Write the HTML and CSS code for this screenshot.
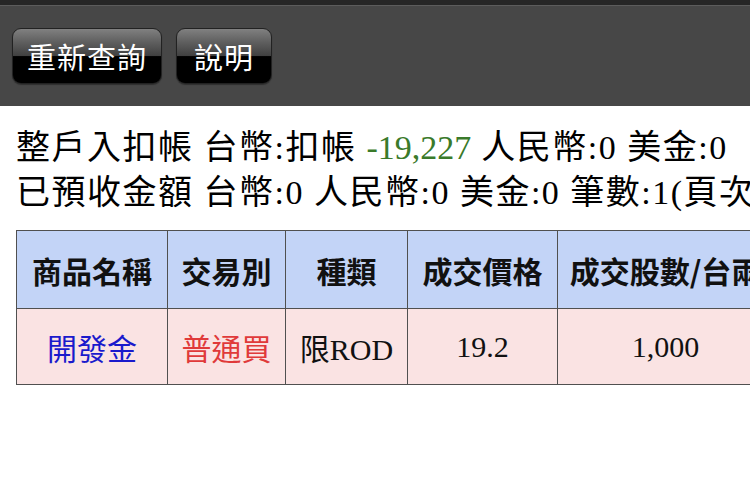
FILE: index.html
```html
<!DOCTYPE html>
<html lang="zh-Hant">
<head>
<meta charset="utf-8">
<title>成交回報</title>
<link rel="stylesheet" href="styles.css">
</head>
<body>
<div class="page">
  <header class="toolbar">
    <button class="btn btn-query">重新查詢</button>
    <button class="btn btn-help">說明</button>
  </header>
  <main class="content">
    <div class="summary">
      <div class="line">整戶入扣帳 台幣:扣帳 <span class="neg">-19,227</span> 人民幣:0 美金:0</div>
      <div class="line">已預收金額 台幣:0 人民幣:0 美金:0 筆數:1(頁次:1/1)</div>
    </div>
    <table class="grid">
      <colgroup>
        <col class="c1">
        <col class="c2">
        <col class="c3">
        <col class="c4">
        <col class="c5">
      </colgroup>
      <thead>
        <tr>
          <th>商品名稱</th>
          <th>交易別</th>
          <th>種類</th>
          <th>成交價格</th>
          <th>成交股數/台兩</th>
        </tr>
      </thead>
      <tbody>
        <tr>
          <td class="name">開發金</td>
          <td class="buy">普通買</td>
          <td>限ROD</td>
          <td>19.2</td>
          <td>1,000</td>
        </tr>
      </tbody>
    </table>
  </main>
</div>
</body>
</html>
```

FILE: styles.css
```css
html, body {
  margin: 0;
  padding: 0;
  background: #ffffff;
  overflow: hidden;
}

.page {
  width: 750px;
  height: 489px;
  overflow: hidden;
}

.toolbar {
  display: flex;
  gap: 14px;
  height: 56px;
  padding: 23px 12px 22px 12px;
  border-top: 5px solid #262626;
  background: #474747;
  box-shadow: inset 0 1px 0 #5c5c5c;
}

.btn {
  box-sizing: border-box;
  height: 56px;
  padding: 0;
  border: 1px solid #222222;
  border-radius: 9px;
  background: linear-gradient(to bottom, #808080 0%, #5e5e5e 25%, #404040 50%, #000000 51%, #000000 100%);
  color: #ffffff;
  font-family: "Noto Sans CJK TC", "Noto Sans", sans-serif;
  font-size: 29px;
  letter-spacing: 1px;
  line-height: 54px;
  white-space: nowrap;
  text-align: center;
  box-shadow: 0 1px 1px rgba(0, 0, 0, 0.35);
}

.btn-query {
  width: 150px;
}

.btn-help {
  width: 96px;
}

.content {
  width: 900px;
  padding: 0 0 0 16px;
}

.summary {
  padding-top: 19px;
  margin-bottom: 15px;
  font-family: "Liberation Serif", "Noto Sans CJK TC", serif;
  font-size: 34px;
  line-height: 45px;
  color: #000000;
  white-space: nowrap;
  letter-spacing: 1.5px;
}

.neg {
  color: #3a7a2a;
  letter-spacing: 0;
}

.grid {
  table-layout: fixed;
  width: 757px;
  border-collapse: collapse;
  border: 1px solid #444444;
  white-space: nowrap;
}

.c1 { width: 151px; }
.c2 { width: 118px; }
.c3 { width: 122px; }
.c4 { width: 150px; }
.c5 { width: 216px; }

.grid th, .grid td {
  border: 1px solid #505050;
  text-align: center;
  padding: 0 10px;
  overflow: hidden;
}

.grid th {
  height: 77px;
  background: #c3d4f7;
  font-family: "Noto Sans CJK TC", "Noto Sans", sans-serif;
  font-weight: 700;
  font-size: 30px;
  color: #111111;
}

.grid td {
  height: 75px;
  background: #fae3e3;
  font-family: "Liberation Serif", "Noto Sans CJK TC", serif;
  font-size: 30px;
  color: #111111;
}

.grid td.name {
  font-family: "Noto Sans CJK TC", sans-serif;
  color: #1a1acc;
}

.grid td.buy {
  font-family: "Noto Sans CJK TC", sans-serif;
  color: #e03a3a;
}
```
